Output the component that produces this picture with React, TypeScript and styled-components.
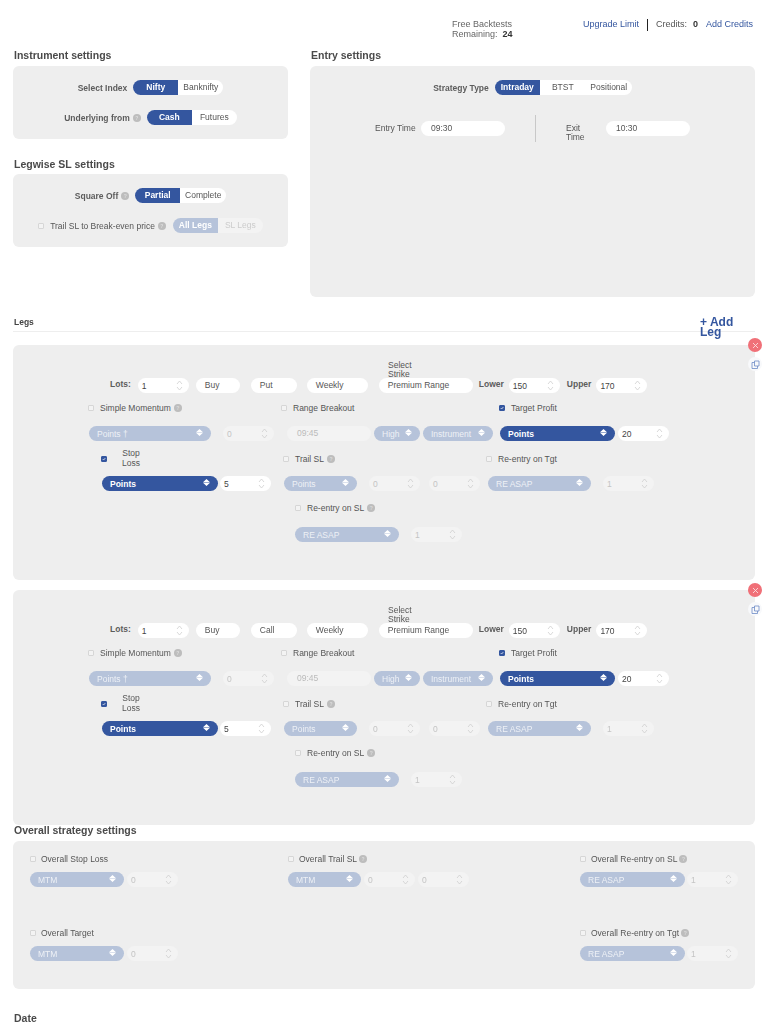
import React from 'react';
import styled, { createGlobalStyle } from 'styled-components';

const BLUE = '#34569f';
const MUTED = '#b6c3da';

const GlobalStyle = createGlobalStyle`
  html, body {
    margin: 0;
    padding: 0;
    background: #ffffff;
    font-family: 'Liberation Sans', Arial, sans-serif;
    font-size: 8.5px;
    color: #555555;
  }
`;

const SelectArrows = () => (
  <svg width="7" height="7" viewBox="0 0 7 7">
    <path d="M3.5 0 L7 3.3 H0 Z M0 3.7 H7 L3.5 7 Z" fill="#ffffff" />
  </svg>
);

const SpinArrows = () => (
  <svg width="7" height="11" viewBox="0 0 7 11" fill="none" stroke="#cfcfcf" strokeWidth="0.8">
    <path d="M1 4 L3.5 1 L6 4 M1 7 L3.5 10 L6 7" />
  </svg>
);

const Help = () => <HelpDot>?</HelpDot>;

const Select = ({ w, ml, on, children }: { w: number; ml?: number; on?: boolean; children: React.ReactNode }) => (
  <SelectBox $w={w} $ml={ml ?? 0} $on={!!on}>
    <span>{children}</span>
    <SelectArrows />
  </SelectBox>
);

const NumberInput = ({ value, ml, off }: { value: string; ml?: number; off?: boolean }) => (
  <NumberBox $ml={ml ?? 0} $off={!!off}>
    <span>{value}</span>
    <SpinArrows />
  </NumberBox>
);

const Check = ({ on }: { on?: boolean }) => (
  <CheckBox $on={!!on}>
    {on && (
      <svg width="6" height="6" viewBox="0 0 6 6" fill="none" stroke="#ffffff" strokeWidth="1">
        <path d="M1 3 L2.5 4.5 L5 1.5" />
      </svg>
    )}
  </CheckBox>
);

const Toggle = ({ left, right, lw, rw, muted }: { left: string; right: string; lw: number; rw: number; muted?: boolean }) => (
  <ToggleWrap $muted={!!muted}>
    <ToggleOn $w={lw} $muted={!!muted}>{left}</ToggleOn>
    <ToggleOff $w={rw} $muted={!!muted}>{right}</ToggleOff>
  </ToggleWrap>
);

const Leg = ({ side, top }: { side: string; top: number }) => (
  <LegCard $top={top}>
    <CloseButton>
      <svg width="7" height="7" viewBox="0 0 7 7" stroke="#fbdfe0" strokeWidth="0.9">
        <path d="M1 1 L6 6 M6 1 L1 6" />
      </svg>
    </CloseButton>
    <CopyButton>
      <svg width="9" height="9" viewBox="0 0 9 9" fill="none" stroke="#6d8cc7" strokeWidth="0.8">
        <path d="M3.5 2.5 H1 V8.5 H6.5 V6 M3.5 1 H8 V6 H3.5 Z" />
      </svg>
    </CopyButton>

    <StrikeLabel>Select<br />Strike</StrikeLabel>
    <Row $pl={97} $mt={0}>
      <FieldLabel>Lots:</FieldLabel>
      <NumberInput value="1" ml={7} />
      <Pill $w={44} $ml={7}>Buy</Pill>
      <Pill $w={46} $ml={11}>{side}</Pill>
      <Pill $w={61} $ml={10}>Weekly</Pill>
      <Pill $w={94} $ml={11}>Premium Range</Pill>
      <FieldLabel $ml={6}>Lower</FieldLabel>
      <NumberInput value="150" ml={5} />
      <FieldLabel $ml={7}>Upper</FieldLabel>
      <NumberInput value="170" ml={5} />
    </Row>

    <Row $pl={75} $mt={7}>
      <CheckLabel $w={193}><Check />Simple Momentum <Help /></CheckLabel>
      <CheckLabel $w={218}><Check />Range Breakout</CheckLabel>
      <CheckLabel $w={100}><Check on />Target Profit</CheckLabel>
    </Row>

    <Row $pl={76} $mt={11}>
      <Select w={122}>Points †</Select>
      <NumberInput value="0" ml={12} off />
      <TextInput $w={84} $ml={13}>09:45</TextInput>
      <Select w={46} ml={3}>High</Select>
      <Select w={70} ml={3}>Instrument</Select>
      <Select w={115} ml={7} on>Points</Select>
      <NumberInput value="20" ml={3} />
    </Row>

    <Row $pl={88} $mt={8}>
      <CheckLabel $w={182}>
        <Check on />
        <StackedLabel>Stop<br />Loss</StackedLabel>
      </CheckLabel>
      <CheckLabel $w={203}><Check />Trail SL <Help /></CheckLabel>
      <CheckLabel $w={100}><Check />Re-entry on Tgt</CheckLabel>
    </Row>

    <Row $pl={89} $mt={8}>
      <Select w={116} on>Points</Select>
      <NumberInput value="5" ml={2} />
      <Select w={73} ml={13}>Points</Select>
      <NumberInput value="0" ml={12} off />
      <NumberInput value="0" ml={9} off />
      <Select w={103} ml={8}>RE ASAP</Select>
      <NumberInput value="1" ml={12} off />
    </Row>

    <Row $pl={282} $mt={9}>
      <CheckLabel $w={100}><Check />Re-entry on SL <Help /></CheckLabel>
    </Row>

    <Row $pl={282} $mt={12}>
      <Select w={104}>RE ASAP</Select>
      <NumberInput value="1" ml={12} off />
    </Row>
  </LegCard>
);

export default function App() {
  return (
    <Page>
      <GlobalStyle />
      <Header>
        <FreeInfo>Free Backtests<br />Remaining: &nbsp;<b>24</b></FreeInfo>
        <HeaderLink $ml={61}>Upgrade Limit</HeaderLink>
        <HeaderDivider />
        <span>Credits:</span>
        <CreditCount>0</CreditCount>
        <HeaderLink $ml={8}>Add Credits</HeaderLink>
      </Header>

      <TopGrid>
        <div>
          <Title>Instrument settings</Title>
          <Panel $h={73}>
            <SettingRow>
              <SettingLabel>Select Index</SettingLabel>
              <Toggle left="Nifty" right="Banknifty" lw={45} rw={45} />
            </SettingRow>
            <SettingRow>
              <SettingLabel>Underlying from <Help /></SettingLabel>
              <Toggle left="Cash" right="Futures" lw={45} rw={45} />
            </SettingRow>
          </Panel>

          <LowerTitle>Legwise SL settings</LowerTitle>
          <Panel $h={73}>
            <SettingRow>
              <SettingLabel>Square Off <Help /></SettingLabel>
              <Toggle left="Partial" right="Complete" lw={45} rw={46} />
            </SettingRow>
            <SettingRow>
              <TrailLabel><Check />Trail SL to Break-even price <Help /></TrailLabel>
              <Toggle left="All Legs" right="SL Legs" lw={45} rw={45} muted />
            </SettingRow>
          </Panel>
        </div>

        <div>
          <Title>Entry settings</Title>
          <EntryPanel>
            <SettingRow>
              <SettingLabel>Strategy Type</SettingLabel>
              <ToggleWrap $muted={false}>
                <ToggleOn $w={45} $muted={false}>Intraday</ToggleOn>
                <ToggleOff $w={46} $muted={false}>BTST</ToggleOff>
                <ToggleOff $w={46} $muted={false}>Positional</ToggleOff>
              </ToggleWrap>
            </SettingRow>
            <TimeRow>
              <TimeLabel $w={41}>Entry Time</TimeLabel>
              <TextInput $w={84} $ml={5} $white>09:30</TextInput>
              <TimeDivider />
              <ExitLabel $w={36}>Exit<br />Time</ExitLabel>
              <TextInput $w={84} $ml={4} $white>10:30</TextInput>
            </TimeRow>
          </EntryPanel>
        </div>
      </TopGrid>

      <LegsHeader>
        <LegsTitle>Legs</LegsTitle>
        <AddLeg>+ Add<br />Leg</AddLeg>
      </LegsHeader>

      <Leg side="Put" top={13} />
      <Leg side="Call" top={10} />

      <OverallTitle>Overall strategy settings</OverallTitle>
      <OverallPanel>
        <OverallGrid>
          <div>
            <OverallLabel $w={120}><Check />Overall Stop Loss</OverallLabel>
            <Row $pl={0} $mt={8}>
              <Select w={94}>MTM</Select>
              <NumberInput value="0" ml={3} off />
            </Row>
          </div>
          <div>
            <OverallLabel $w={120}><Check />Overall Trail SL <Help /></OverallLabel>
            <Row $pl={0} $mt={8}>
              <Select w={73}>MTM</Select>
              <NumberInput value="0" ml={3} off />
              <NumberInput value="0" ml={3} off />
            </Row>
          </div>
          <div>
            <OverallLabel $w={120}><Check />Overall Re-entry on SL <Help /></OverallLabel>
            <Row $pl={0} $mt={8}>
              <Select w={105}>RE ASAP</Select>
              <NumberInput value="1" ml={2} off />
            </Row>
          </div>
          <div>
            <OverallLabel $w={120}><Check />Overall Target</OverallLabel>
            <Row $pl={0} $mt={8}>
              <Select w={94}>MTM</Select>
              <NumberInput value="0" ml={3} off />
            </Row>
          </div>
          <div />
          <div>
            <OverallLabel $w={120}><Check />Overall Re-entry on Tgt <Help /></OverallLabel>
            <Row $pl={0} $mt={8}>
              <Select w={105}>RE ASAP</Select>
              <NumberInput value="1" ml={2} off />
            </Row>
          </div>
        </OverallGrid>
      </OverallPanel>

      <DateTitle>Date</DateTitle>
    </Page>
  );
}

const Page = styled.div`
  box-sizing: border-box;
  width: 768px;
  height: 1024px;
  padding: 0 13px;
  overflow: hidden;
  filter: blur(0.35px);
`;

const Header = styled.div`
  display: flex;
  align-items: flex-start;
  height: 49px;
  padding: 19px 0 0 439px;
  box-sizing: border-box;
  font-size: 9px;
  line-height: 10px;
  white-space: nowrap;
`;

const FreeInfo = styled.div`
  color: #666666;
  width: 70px;

  b {
    color: #333333;
  }
`;

const HeaderLink = styled.a<{ $ml: number }>`
  margin-left: ${(p) => p.$ml}px;
  color: ${BLUE};
`;

const HeaderDivider = styled.div`
  width: 1px;
  height: 12px;
  margin: 0 8px;
  background: #222222;
`;

const CreditCount = styled.b`
  margin-left: 6px;
  color: #333333;
`;

const TopGrid = styled.div`
  display: grid;
  grid-template-columns: 275px 445px;
  column-gap: 22px;
`;

const Title = styled.div`
  height: 17px;
  padding-left: 1px;
  font-size: 10.5px;
  line-height: 13px;
  font-weight: 700;
  color: #4a4a4a;
`;

const LowerTitle = styled(Title)`
  height: 16px;
  margin-top: 19px;
`;

const Panel = styled.div<{ $h: number }>`
  display: flex;
  flex-direction: column;
  align-items: center;
  gap: 15px;
  box-sizing: border-box;
  height: ${(p) => p.$h}px;
  padding-top: 14px;
  background: #eeeeee;
  border-radius: 6px;
`;

const EntryPanel = styled(Panel).attrs({ $h: 231 })`
  gap: 20px;
`;

const SettingRow = styled.div`
  display: flex;
  align-items: center;
  height: 15px;
  gap: 6px;
`;

const SettingLabel = styled.div`
  display: flex;
  align-items: center;
  gap: 3px;
  font-weight: 700;
  color: #5c5c5c;
  white-space: nowrap;
`;

const TrailLabel = styled.div`
  display: flex;
  align-items: center;
  gap: 3px;
  margin-right: 1px;
  color: #555555;
  white-space: nowrap;
`;

const ToggleWrap = styled.div<{ $muted: boolean }>`
  display: flex;
  height: 15px;
  overflow: hidden;
  border-radius: 8px;
  background: ${(p) => (p.$muted ? '#f3f3f3' : '#ffffff')};
`;

const ToggleOn = styled.div<{ $w: number; $muted: boolean }>`
  width: ${(p) => p.$w}px;
  line-height: 15px;
  text-align: center;
  font-weight: 700;
  color: #ffffff;
  background: ${(p) => (p.$muted ? MUTED : BLUE)};
`;

const ToggleOff = styled.div<{ $w: number; $muted: boolean }>`
  width: ${(p) => p.$w}px;
  line-height: 15px;
  text-align: center;
  color: ${(p) => (p.$muted ? '#cccccc' : '#555555')};
`;

const TimeRow = styled.div`
  display: flex;
  align-items: center;
`;

const TimeLabel = styled.div<{ $w: number }>`
  width: ${(p) => p.$w}px;
  line-height: 9px;
  color: #555555;
  white-space: nowrap;
`;

const ExitLabel = styled(TimeLabel)`
  margin-top: 8px;
`;

const TimeDivider = styled.div`
  width: 1px;
  height: 27px;
  margin: 0 30px;
  background: #c8c8c8;
`;

const LegsHeader = styled.div`
  display: flex;
  justify-content: space-between;
  align-items: flex-start;
  box-sizing: border-box;
  height: 16px;
  margin-top: 19px;
  padding: 1px 20px 0 0;
  border-bottom: 1px solid #eeeeee;
`;

const LegsTitle = styled.div`
  padding-left: 1px;
  line-height: 10px;
  font-weight: 700;
  color: #444444;
`;

const AddLeg = styled.div`
  width: 35px;
  font-size: 12px;
  line-height: 10px;
  font-weight: 700;
  color: ${BLUE};
`;

const LegCard = styled.div<{ $top: number }>`
  position: relative;
  box-sizing: border-box;
  height: 235px;
  margin-top: ${(p) => p.$top}px;
  padding-top: 33px;
  background: #eeeeee;
  border-radius: 6px;
`;

const CloseButton = styled.div`
  position: absolute;
  top: -7px;
  right: -7px;
  display: flex;
  align-items: center;
  justify-content: center;
  width: 14px;
  height: 14px;
  border-radius: 50%;
  background: #f07078;
`;

const CopyButton = styled.div`
  position: absolute;
  top: 12px;
  right: -7px;
  display: flex;
  align-items: center;
  justify-content: center;
  width: 14px;
  height: 14px;
  border-radius: 50%;
  background: #f8f9fb;
`;

const StrikeLabel = styled.div`
  position: absolute;
  top: 16px;
  left: 375px;
  line-height: 9px;
  color: #555555;
`;

const Row = styled.div<{ $pl: number; $mt: number }>`
  display: flex;
  align-items: center;
  min-height: 15px;
  padding-left: ${(p) => p.$pl}px;
  margin-top: ${(p) => p.$mt}px;
  white-space: nowrap;
`;

const FieldLabel = styled.div<{ $ml?: number }>`
  margin: -3px 0 0 ${(p) => p.$ml ?? 0}px;
  font-weight: 700;
  color: #5c5c5c;
`;

const Pill = styled.div<{ $w: number; $ml: number }>`
  box-sizing: border-box;
  width: ${(p) => p.$w}px;
  height: 15px;
  margin-left: ${(p) => p.$ml}px;
  padding-left: 9px;
  line-height: 15px;
  border-radius: 8px;
  background: #ffffff;
  color: #555555;
`;

const TextInput = styled.div<{ $w: number; $ml: number; $white?: boolean }>`
  box-sizing: border-box;
  width: ${(p) => p.$w}px;
  height: 15px;
  margin-left: ${(p) => p.$ml}px;
  padding-left: 10px;
  line-height: 15px;
  border-radius: 8px;
  background: ${(p) => (p.$white ? '#ffffff' : '#f3f3f3')};
  color: ${(p) => (p.$white ? '#555555' : '#bbbbbb')};
`;

const NumberBox = styled.div<{ $ml: number; $off: boolean }>`
  display: flex;
  align-items: center;
  justify-content: space-between;
  box-sizing: border-box;
  width: 51px;
  height: 15px;
  margin-left: ${(p) => p.$ml}px;
  padding: 0 6px 0 4px;
  border-radius: 8px;
  background: ${(p) => (p.$off ? '#f3f3f3' : '#ffffff')};
  color: ${(p) => (p.$off ? '#c4c4c4' : '#444444')};
`;

const SelectBox = styled.div<{ $w: number; $ml: number; $on: boolean }>`
  display: flex;
  flex: none;
  align-items: center;
  justify-content: space-between;
  box-sizing: border-box;
  width: ${(p) => p.$w}px;
  height: 15px;
  margin-left: ${(p) => p.$ml}px;
  padding: 0 8px;
  border-radius: 8px;
  background: ${(p) => (p.$on ? BLUE : MUTED)};
  color: ${(p) => (p.$on ? '#ffffff' : '#eef1f6')};
  font-weight: ${(p) => (p.$on ? 700 : 400)};

  svg {
    margin-top: -2px;
  }
`;

const CheckLabel = styled.div<{ $w: number }>`
  display: flex;
  flex: none;
  align-items: center;
  gap: 3px;
  width: ${(p) => p.$w}px;
  color: #555555;
  white-space: nowrap;
`;

const OverallLabel = styled(CheckLabel)`
  gap: 2px;
`;

const CheckBox = styled.span<{ $on: boolean }>`
  display: inline-flex;
  flex: none;
  align-items: center;
  justify-content: center;
  box-sizing: border-box;
  width: 6px;
  height: 6px;
  margin-right: 3px;
  border-radius: 1px;
  border: 1px solid ${(p) => (p.$on ? BLUE : '#d6d6d6')};
  background: ${(p) => (p.$on ? BLUE : '#f3f3f3')};
`;

const StackedLabel = styled.span`
  margin-left: 9px;
  line-height: 9.5px;
  text-align: center;
`;

const HelpDot = styled.span`
  display: inline-flex;
  flex: none;
  align-items: center;
  justify-content: center;
  width: 8px;
  height: 8px;
  border-radius: 50%;
  background: #bdbdbd;
  color: #dddddd;
  font-size: 5px;
  font-weight: 700;
`;

const OverallTitle = styled.div`
  height: 16px;
  padding-left: 1px;
  font-size: 10.5px;
  line-height: 11px;
  font-weight: 700;
  color: #4a4a4a;
`;

const OverallPanel = styled.div`
  box-sizing: border-box;
  height: 148px;
  padding: 13px 17px 0;
  background: #eeeeee;
  border-radius: 6px;
`;

const OverallGrid = styled.div`
  display: grid;
  grid-template-columns: 258px 292px 1fr;
  grid-auto-rows: 74px;
`;

const DateTitle = styled.div`
  margin-top: 23px;
  padding-left: 1px;
  font-size: 10.5px;
  line-height: 13px;
  font-weight: 700;
  color: #4a4a4a;
`;
